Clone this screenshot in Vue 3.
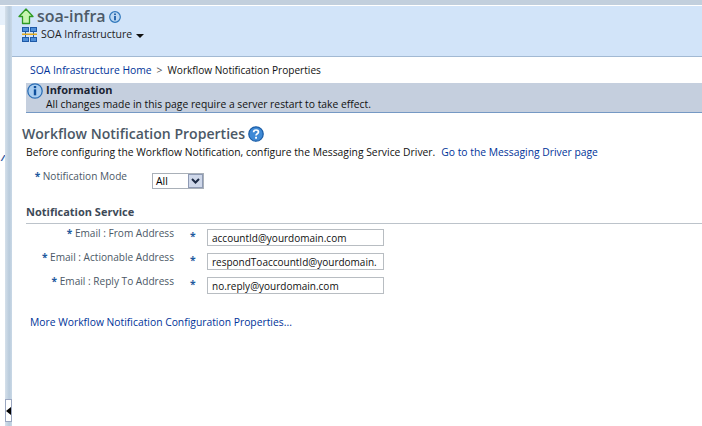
<script setup>
const fields = [
  { label: 'Email : From Address', value: 'accountId@yourdomain.com' },
  { label: 'Email : Actionable Address', value: 'respondToaccountId@yourdomain.' },
  { label: 'Email : Reply To Address', value: 'no.reply@yourdomain.com' },
]
</script>

<template>
  <div class="page">
    <div class="topbar"></div>
    <div class="body">
      <aside class="nav">
        <div class="nav-pane">
          <div class="nav-tint"></div>
          <span class="nav-glyph">/</span>
        </div>
        <div class="splitter">
          <div class="handle">
            <svg width="5" height="8" viewBox="0 0 5 8"><path d="M0 4L5 0V8Z" fill="#000" /></svg>
          </div>
        </div>
      </aside>
      <main class="main">
        <header class="head">
          <div class="title-row">
            <svg class="up" width="16" height="17" viewBox="0 0 16 17">
              <path d="M8 1L15 8.500H11.500V15.500H4.500V8.500H1Z" fill="#c8f5b0" stroke="#2f9a25" stroke-width="1.300" stroke-linejoin="round" />
            </svg>
            <span class="title">soa-infra</span>
            <svg class="info-sm" width="12" height="12" viewBox="0 0 12 12">
              <circle cx="6" cy="6" r="5.300" fill="#bcd8f3" stroke="#2f77bb" stroke-width="1.200" />
              <rect x="5.100" y="2.500" width="1.800" height="1.600" fill="#1b5ea8" />
              <rect x="5.100" y="5" width="1.800" height="4.300" fill="#1b5ea8" />
            </svg>
          </div>
          <div class="menu-row">
            <svg width="15" height="15" viewBox="0 0 15 15">
              <rect x="0.500" y="0.500" width="6" height="4" fill="#4f8fd8" stroke="#1f5aa8" />
              <rect x="8.500" y="0.500" width="6" height="4" fill="#4f8fd8" stroke="#1f5aa8" />
              <rect x="3" y="4.500" width="1" height="6" fill="#1f5aa8" />
              <rect x="11" y="4.500" width="1" height="6" fill="#1f5aa8" />
              <rect x="0" y="6.500" width="15" height="1.500" fill="#e0a91f" />
              <rect x="0.500" y="10.500" width="6" height="4" fill="#4f8fd8" stroke="#1f5aa8" />
              <rect x="8.500" y="10.500" width="6" height="4" fill="#4f8fd8" stroke="#1f5aa8" />
            </svg>
            <span class="menu-label">SOA Infrastructure</span>
            <svg class="caret" width="8" height="4" viewBox="0 0 8 4"><path d="M0 0H8L4 4Z" fill="#111" /></svg>
          </div>
        </header>

        <nav class="crumbs">
          <a class="link">SOA Infrastructure Home</a>
          <span class="sep">&gt;</span>
          <span class="crumb-current">Workflow Notification Properties</span>
        </nav>

        <section class="banner">
          <svg class="info-lg" width="16" height="16" viewBox="0 0 16 16">
            <circle cx="8" cy="8" r="7.200" fill="#a9cdf0" stroke="#2d6fb5" stroke-width="1.300" />
            <rect x="6.800" y="3" width="2.400" height="2.200" fill="#0f4f9c" />
            <rect x="6.800" y="6.300" width="2.400" height="6" fill="#0f4f9c" />
          </svg>
          <div>
            <div class="banner-title">Information</div>
            <div class="banner-text">All changes made in this page require a server restart to take effect.</div>
          </div>
        </section>

        <div class="content">
          <h1 class="heading">
            Workflow Notification Properties
            <svg width="16" height="16" viewBox="0 0 16 16">
              <circle cx="8" cy="8" r="7.200" fill="#3f8ad6" stroke="#1d5fa8" stroke-width="1.300" />
              <path d="M5.600 6.200C5.700 3.300 10.500 3.300 10.500 6C10.500 7.700 8 7.700 8 9.500" fill="none" stroke="#fff" stroke-width="1.700" />
              <rect x="7.100" y="10.800" width="1.900" height="1.900" fill="#fff" />
            </svg>
          </h1>
          <p class="intro">
            <span>Before configuring the Workflow Notification, configure the Messaging Service Driver.</span>
            <a class="link">Go to the Messaging Driver page</a>
          </p>

          <div class="mode-row">
            <label class="mode-label"><span class="star">*</span> Notification Mode</label>
            <div class="select">
              <span class="select-value">All</span>
              <span class="select-btn">
                <svg width="9" height="6" viewBox="0 0 9 6"><path d="M1 1L4.500 4.500L8 1" fill="none" stroke="#1c2a44" stroke-width="2" /></svg>
              </span>
            </div>
          </div>

          <h2 class="subheading">Notification Service</h2>

          <div class="form">
            <div v-for="f in fields" :key="f.label" class="form-row">
              <label class="form-label"><span class="star">*</span> {{ f.label }}</label>
              <span class="star star-mid">*</span>
              <div class="input">{{ f.value }}</div>
            </div>
          </div>

          <a class="link more">More Workflow Notification Configuration Properties...</a>
        </div>
      </main>
    </div>
  </div>
</template>

<style>
html, body { margin: 0; background: #fff; }
</style>

<style scoped>
.page {
  width: 702px;
  height: 426px;
  overflow: hidden;
  display: flex;
  flex-direction: column;
  font-family: "Open Sans", "DejaVu Sans", sans-serif;
  font-size: 10.33px;
  color: #111;
  background: #fff;
}
.topbar { height: 5px; background: #c2cfdd; border-bottom: 1px solid #fff; flex: none; }
.body { flex: 1; display: flex; min-height: 0; }
.nav { width: 12px; flex: none; display: flex; }
.nav-pane { width: 5px; position: relative; background: #fff; }
.nav-tint { height: 19px; background: #e6f0fb; }
.nav-glyph { position: absolute; left: 1px; top: 145px; font-size: 9px; font-weight: 700; font-style: italic; color: #1f4f9a; }
.splitter { width: 7px; position: relative; background: linear-gradient(90deg, #d5e0ea, #b9cbdc 60%, #c9d8e6); }
.handle {
  position: absolute;
  left: 0;
  top: 393px;
  width: 7px;
  height: 23px;
  box-sizing: border-box;
  background: #fff;
  border: 1px solid #9aa6c0;
  display: flex;
  align-items: center;
  justify-content: center;
}
.main { flex: 1; min-width: 0; }
.head {
  height: 51px;
  box-sizing: border-box;
  background: #d2e4f9;
  border-bottom: 1px solid #a2b9d3;
  padding-left: 6px;
}
.title-row { display: flex; align-items: center; height: 20px; }
.up { margin-right: 3px; }
.title { font-size: 16px; font-weight: 600; color: #4d5a68; line-height: 18px; margin-top: -1px; }
.info-sm { margin-left: 3px; margin-top: 2px; }
.menu-row { display: flex; align-items: center; height: 17px; padding-left: 4px; }
.menu-label { margin-left: 4px; color: #222; font-size: 10.5px; margin-top: -2px; }
.caret { margin-left: 4px; margin-top: 2px; }
.crumbs { padding: 7px 0 0 18px; height: 19px; line-height: 13px; display: flex; gap: 5px; }
.crumb-current { font-size: 10.1px; }
.sep { color: #555; }
.link { color: #003399; }
.banner {
  margin-left: 14px;
  height: 29px;
  background: #c5cfde;
  border-bottom: 1px solid #7599c4;
  display: flex;
  gap: 3px;
  padding-left: 1px;
}
.banner-title { font-weight: 700; font-size: 11px; line-height: 14px; color: #1a2433; }
.banner-text { line-height: 15px; }
.content { padding-left: 10px; }
.heading {
  margin: 12px 0 0;
  font-size: 14.05px;
  font-weight: 600;
  line-height: 18px;
  color: #4b5866;
  display: flex;
  align-items: center;
  gap: 3px;
}
.intro { margin: 3px 0 0 4px; line-height: 13px; display: flex; gap: 6px; white-space: nowrap; }
.mode-row { display: flex; align-items: flex-start; margin-top: 12px; height: 20px; }
.mode-label { width: 105px; margin-top: -1px; text-align: right; color: #4b5866; line-height: 13px; flex: none; font-size: 10.1px; }
.star { color: #1f5a9e; font-weight: 700; }
.select {
  margin-left: 25px;
  margin-top: 2px;
  width: 52px;
  height: 16px;
  box-sizing: border-box;
  border: 1px solid #a9b0b8;
  display: flex;
  justify-content: space-between;
  align-items: stretch;
}
.select-value { padding-left: 3px; line-height: 15px; color: #000; }
.select-btn {
  width: 15px;
  background: #cfd8ea;
  border: 1px solid #8e9ab4;
  box-sizing: border-box;
  display: flex;
  align-items: center;
  justify-content: center;
}
.subheading {
  margin: 14px 0 0 4px;
  padding-bottom: 4px;
  border-bottom: 1px solid #bcc3ca;
  font-size: 11px;
  font-weight: 700;
  line-height: 14px;
  color: #3d4957;
}
.form { margin-top: 5px; display: flex; flex-direction: column; gap: 7px; }
.form-row { display: flex; align-items: flex-start; height: 17px; }
.form-label { width: 152px; text-align: right; color: #4b5866; line-height: 13px; flex: none; white-space: nowrap; font-size: 10.1px; margin-top: -2px; }
.star-mid { width: 17px; margin-left: 16px; line-height: 14px; margin-top: 0; flex: none; }
.input {
  width: 177px;
  height: 17px;
  box-sizing: border-box;
  border: 1px solid #b8bdc2;
  padding-left: 4px;
  line-height: 16px;
  font-size: 10px;
  color: #111;
  overflow: hidden;
  white-space: nowrap;
}
.more { display: block; margin: 22px 0 0 8px; line-height: 13px; }
</style>
